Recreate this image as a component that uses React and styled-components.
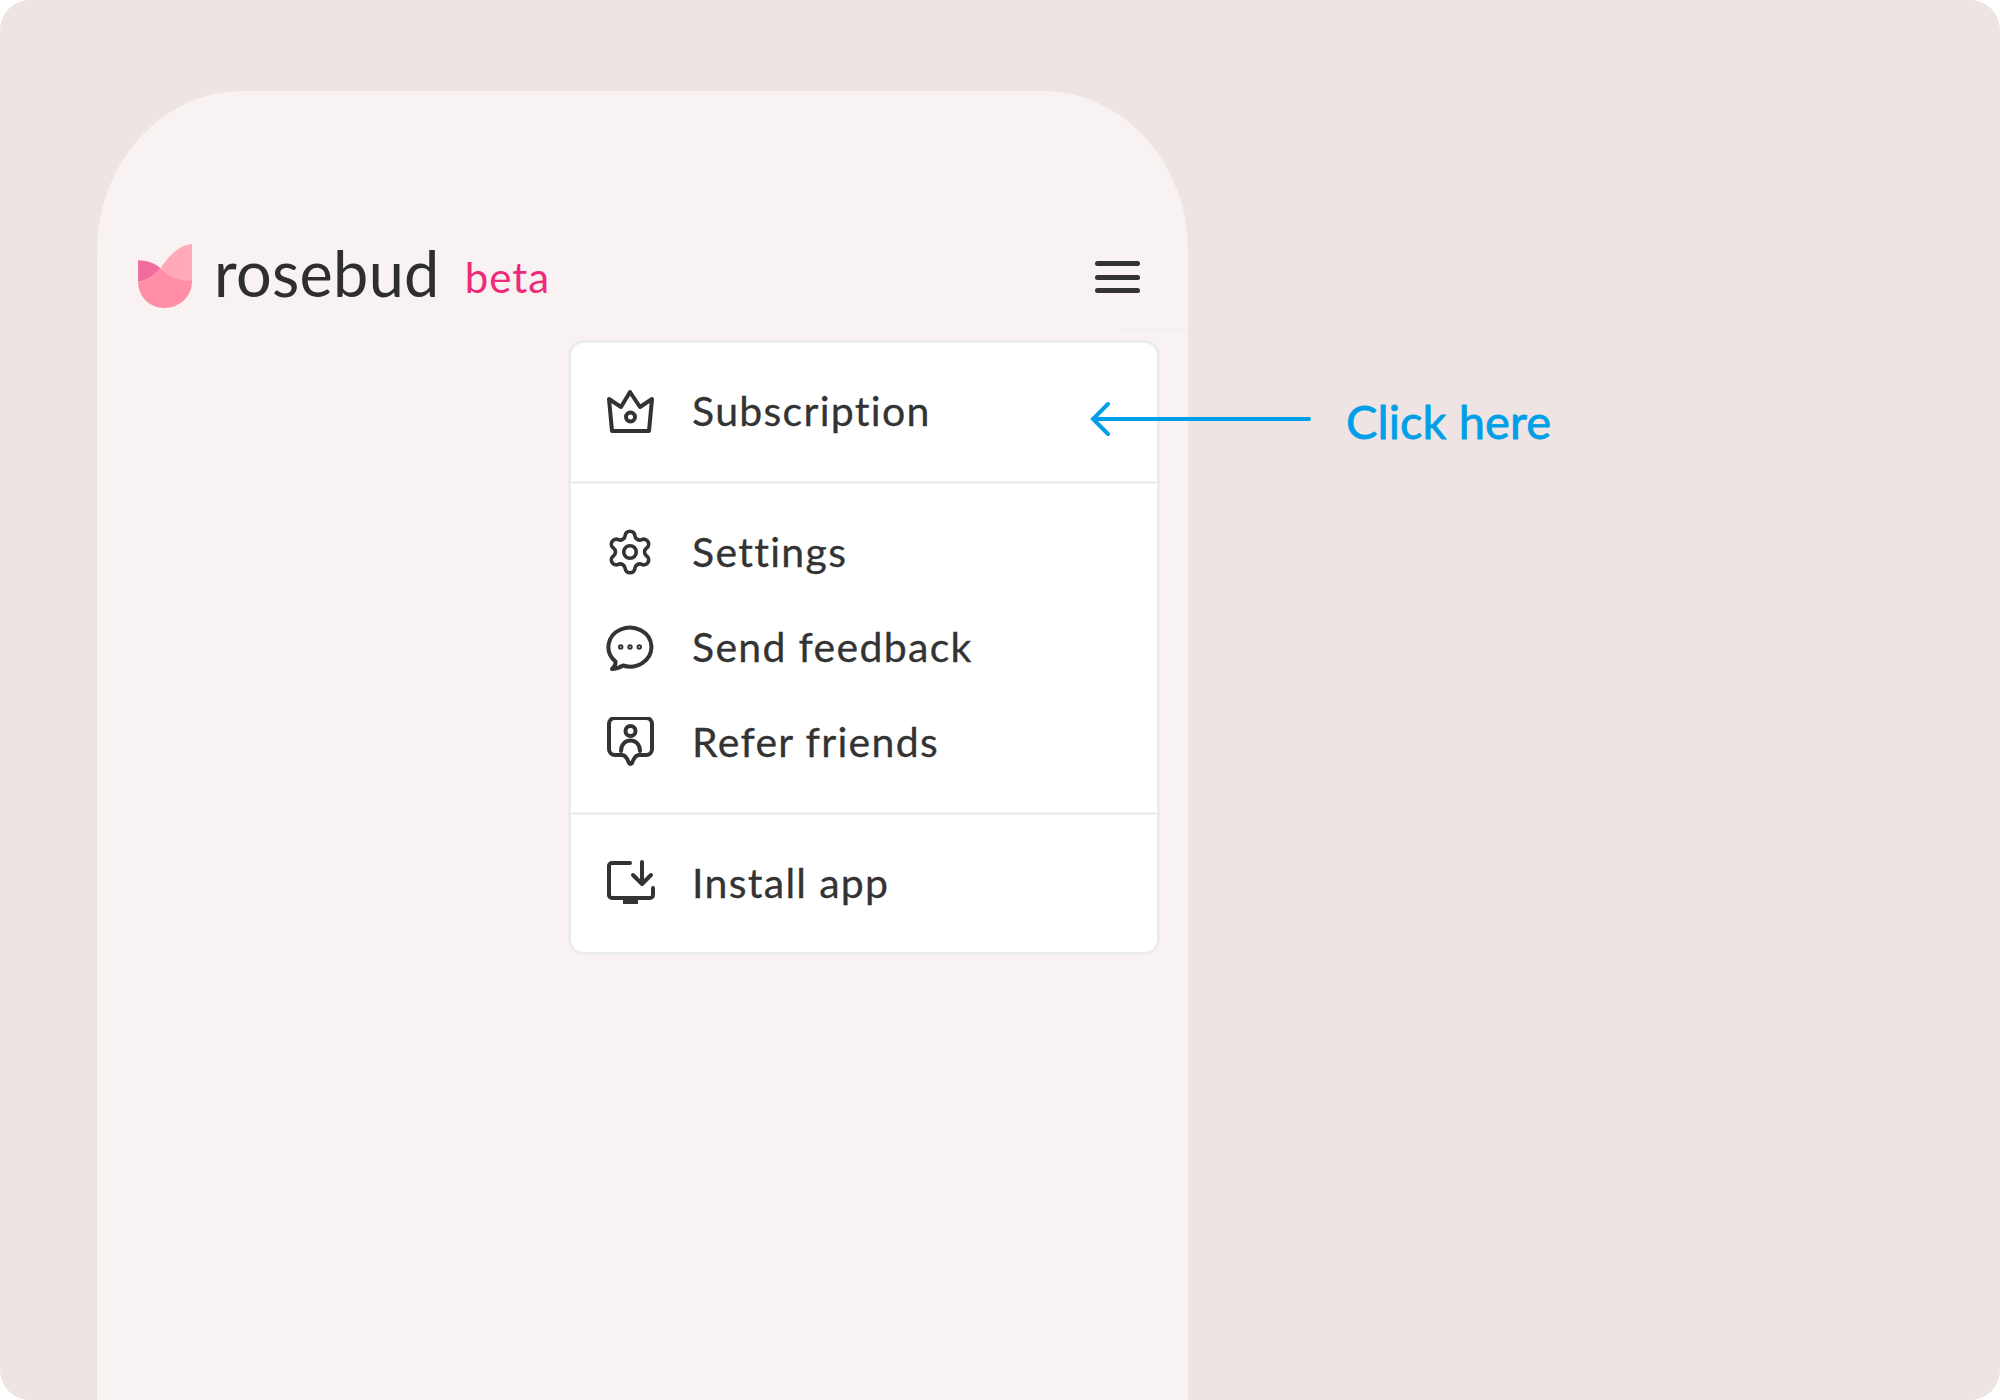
import React from 'react'
import styled, { createGlobalStyle } from 'styled-components'
import { Settings } from 'lucide-react'

const GlobalStyle = createGlobalStyle`
  html, body {
    margin: 0;
    padding: 0;
    background: #fff;
  }
`

const Page = styled.div`
  position: relative;
  box-sizing: border-box;
  width: 2000px;
  height: 1400px;
  padding: 91px 0 0 97px;
  overflow: hidden;
  background: #eee4e4;
  border-radius: 30px;
  font-family: Lato, "Liberation Sans", sans-serif;
`

const Phone = styled.div`
  display: flex;
  flex-direction: column;
  width: 1091px;
  height: 1309px;
  background: #f8f2f2;
  border-radius: 145px 145px 0 0 / 160px 160px 0 0;
`

const Header = styled.div`
  display: flex;
  align-items: center;
  height: 237px;
  padding: 100px 48px 0 41px;
  box-sizing: border-box;
`

const LogoMark = styled.svg`
  width: 54px;
  height: 64px;
  margin-top: 33px;
`

const Wordmark = styled.span`
  margin: 26px 0 0 22px;
  font-size: 63px;
  line-height: 1;
  color: #2e2e2e;
  letter-spacing: 0.3px;
`

const Beta = styled.span`
  margin: 35px 0 0 25px;
  font-size: 42px;
  line-height: 1;
  color: #ee2a7b;
  letter-spacing: 1px;
`

const Burger = styled.div`
  display: flex;
  flex-direction: column;
  gap: 8.5px;
  margin: 35px 0 0 auto;
`

const BurgerBar = styled.span`
  display: block;
  width: 45px;
  height: 5px;
  border-radius: 2.5px;
  background: #333;
`

const HeaderRule = styled.div`
  align-self: flex-end;
  width: 70px;
  height: 1px;
  background: #f3eeee;
`

const Menu = styled.div`
  width: 592px;
  margin: 11px 0 0 471px;
  box-sizing: border-box;
  background: #fff;
  border: 3px solid #ececec;
  border-radius: 16px;
`

const Section = styled.div`
  padding: ${props => props.$top}px 0 ${props => props.$bottom}px;
  & + & {
    border-top: 3px solid #f0eeee;
  }
`

const Row = styled.div`
  display: flex;
  align-items: center;
  height: 95px;
  padding-left: 34px;
  color: #333;
`

const Icon = styled.svg`
  flex: none;
  width: 50px;
  height: 50px;
  fill: none;
  stroke: #333;
  stroke-width: 4;
  stroke-linecap: round;
  stroke-linejoin: round;
`

const LucideSlot = styled.span`
  display: flex;
  flex: none;
  width: 50px;
  justify-content: center;
  color: #333;
`

const Label = styled.span`
  margin-left: 37px;
  font-size: 41px;
  letter-spacing: 1.3px;
  -webkit-text-stroke: 0.3px #333;
`

const Callout = styled.div`
  position: absolute;
  left: 1090px;
  top: 389px;
  display: flex;
  align-items: center;
  gap: 20px;
  color: #009fe8;
`

const ArrowSvg = styled.svg`
  width: 221px;
  height: 50px;
  fill: none;
  stroke: #009fe8;
  stroke-width: 4;
  stroke-linecap: round;
`

const CalloutText = styled.span`
  margin: 4px 0 0 15px;
  font-size: 47px;
  letter-spacing: 0.1px;
  -webkit-text-stroke: 0.8px #009fe8;
`

const Crown = () => (
  <Icon viewBox='0 0 50 50'>
    <path d='M4 13 L16 21 L25 6 L35 21 L47 13 L44 45 H7 Z' />
    <circle cx='25.5' cy='31' r='4.5' />
  </Icon>
)

const Feedback = () => (
  <Icon viewBox='0 0 50 50'>
    <path d='M10.5 39.5 A21.5 19.5 0 1 1 18 43.5 C14 46 10 47 7 47 C9 45 11 42 10.5 39.5 Z' />
    <circle cx='15.7' cy='25' r='1' strokeWidth='3.4' />
    <circle cx='25' cy='25' r='1' strokeWidth='3.4' />
    <circle cx='34.3' cy='25' r='1' strokeWidth='3.4' />
  </Icon>
)

const Refer = () => (
  <Icon viewBox='0 0 50 50'>
    <path d='M10 1 H41 A6 6 0 0 1 47 7 V32 A6 6 0 0 1 41 38 H34 Q30 38 27 46 Q25.5 48 24 46 Q21 38 17 38 H10 A6 6 0 0 1 4 32 V7 A6 6 0 0 1 10 1 Z' />
    <circle cx='25.5' cy='14' r='5' />
    <path d='M16 34 C16 20 35 20 35 34' />
  </Icon>
)

const Install = () => (
  <Icon viewBox='0 0 50 50'>
    <path d='M25 5 H7 A3 3 0 0 0 4 8 V37 A3 3 0 0 0 7 40 H45 A3 3 0 0 0 48 37 V30' />
    <path d='M18 43 H33' strokeWidth='6' strokeLinecap='butt' />
    <path d='M37 4 V26 M28 17 L37 26 L46 17' />
  </Icon>
)

export default function App () {
  return (
    <Page>
      <GlobalStyle />
      <Phone>
        <Header>
          <LogoMark viewBox='0 0 53 63'>
            <path fill='#ffa9b9' d='M22 24 C30 12 40 1 53 0 L53 37 C42 37 31 32 22 24 Z' />
            <path fill='#f06c9f' d='M0 16 C9 16 17 19 22 24 C17 30 9 36 0 37 Z' />
            <path fill='#ff8ea6' d='M0 37 C9 36 17 30 22 24 C31 32 42 37 53 36 L53 37 C53 52 41 63 26 63 C11 63 0 52 0 37 Z' />
          </LogoMark>
          <Wordmark>rosebud</Wordmark>
          <Beta>beta</Beta>
          <Burger>
            <BurgerBar />
            <BurgerBar />
            <BurgerBar />
          </Burger>
        </Header>
        <HeaderRule />
        <Menu>
          <Section $top={20} $bottom={23}>
            <Row><Crown /><Label>Subscription</Label></Row>
          </Section>
          <Section $top={20} $bottom={23}>
            <Row>
              <LucideSlot><Settings size={56} strokeWidth={1.75} /></LucideSlot>
              <Label>Settings</Label>
            </Row>
            <Row><Feedback /><Label>Send feedback</Label></Row>
            <Row><Refer /><Label>Refer friends</Label></Row>
          </Section>
          <Section $top={20} $bottom={22}>
            <Row><Install /><Label>Install app</Label></Row>
          </Section>
        </Menu>
      </Phone>
      <Callout>
        <ArrowSvg viewBox='0 0 221 50'>
          <path d='M219 25 H3 M18 10 L3 25 L18 40' />
        </ArrowSvg>
        <CalloutText>Click here</CalloutText>
      </Callout>
    </Page>
  )
}
